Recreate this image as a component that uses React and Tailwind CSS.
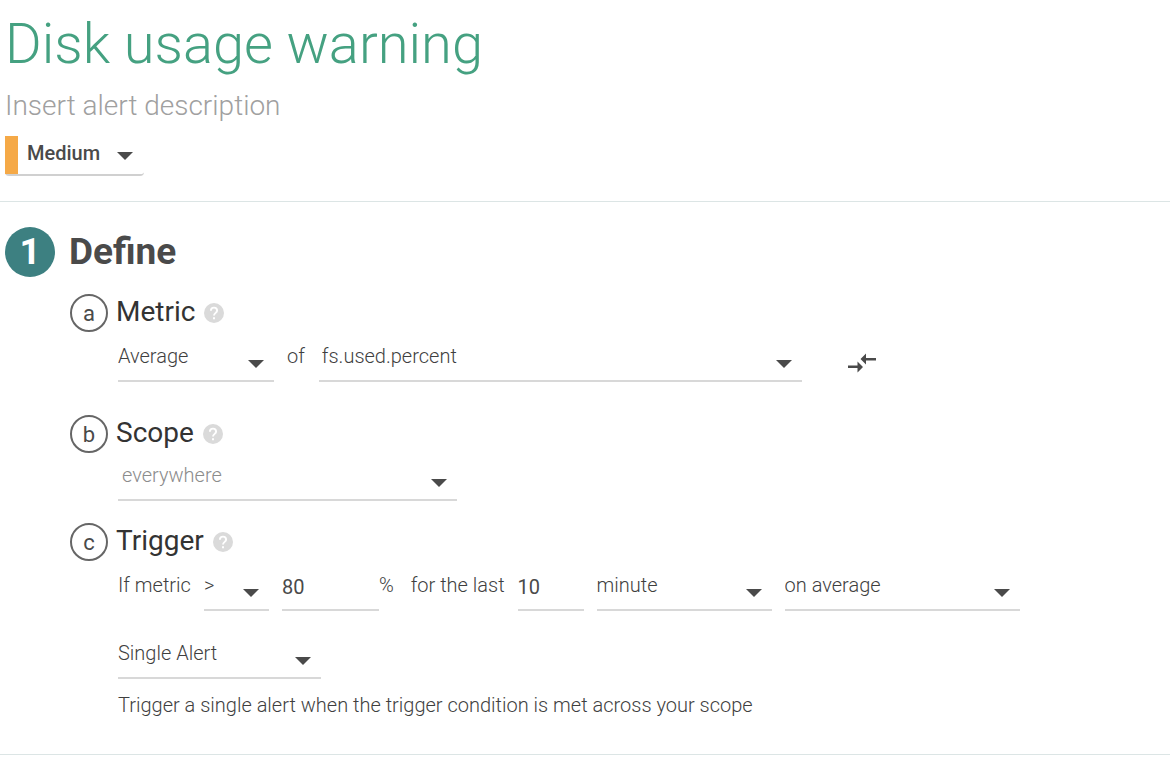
import React, { useState } from 'react';

const SelectField = ({ label, options, value, onChange, className, selectClass = '' }) => (
  <div className={`relative ${className}`}>
    <select
      aria-label={label}
      value={value}
      onChange={(e) => onChange(e.target.value)}
      className={`block w-full h-10 pb-[10px] leading-7 appearance-none bg-transparent border-b-2 border-[#d8d8d8] rounded-none outline-none ${selectClass}`}
    >
      {options.map((option) => (
        <option key={option} value={option}>{option}</option>
      ))}
    </select>
    <svg className="absolute right-[10px] bottom-[14px] w-4 h-2 pointer-events-none" viewBox="0 0 16 8" fill="#4a4a4a">
      <path d="M0 0h16L8 8z" />
    </svg>
  </div>
);

const NumberField = ({ label, value, onChange, className }) => (
  <input
    type="text"
    inputMode="numeric"
    aria-label={label}
    value={value}
    onChange={(e) => onChange(e.target.value)}
    className={`h-10 pb-[6px] font-normal text-[#4a4a4a] bg-transparent border-b-2 border-[#d8d8d8] outline-none ${className}`}
  />
);

const StepHeading = ({ letter, title }) => (
  <div className="flex items-center">
    <span className="flex items-center justify-center w-[38px] h-[38px] pt-[2px] rounded-full border-2 border-[#666666] text-[22px] leading-7 font-normal text-[#4a4a4a]">
      {letter}
    </span>
    <h3 className="ml-2 pb-[2px] text-[28px] leading-8 font-normal text-[#333333]">{title}</h3>
    <button type="button" aria-label={`${title} help`} className="ml-[9px]">
      <svg className="w-5 h-5" viewBox="0 0 20 20" fill="none">
        <circle cx="10" cy="10" r="10" fill="#dadada" />
        <path d="M6.9 7.7a3.1 3.1 0 116.2 0c0 2-3.1 2.4-3.1 4.8" stroke="#fff" strokeWidth="1.9" />
        <path d="M9 14.3h2v2H9z" fill="#fff" />
      </svg>
    </button>
  </div>
);

export default function App() {
  const [severity, setSeverity] = useState('Medium');
  const [description, setDescription] = useState('');
  const [aggregation, setAggregation] = useState('Average');
  const [metric, setMetric] = useState('fs.used.percent');
  const [scope, setScope] = useState('everywhere');
  const [operator, setOperator] = useState('>');
  const [threshold, setThreshold] = useState('80');
  const [duration, setDuration] = useState('10');
  const [unit, setUnit] = useState('minute');
  const [condition, setCondition] = useState('on average');
  const [alertType, setAlertType] = useState('Single Alert');

  return (
    <main className="bg-white font-['Roboto',sans-serif] font-light text-xl leading-7 text-[#3f3f3f]">
      <header className="px-[5px] pt-3 pb-[25px] border-b border-[#dce5e5]">
        <h1 className="text-[56px] leading-[64px] text-[#45a181]">Disk usage warning</h1>
        <input
          type="text"
          aria-label="Alert description"
          placeholder="Insert alert description"
          value={description}
          onChange={(e) => setDescription(e.target.value)}
          className="block w-full mt-3 h-9 text-[28px] leading-9 bg-transparent outline-none placeholder:text-[#a0a0a0]"
        />
        <div className="relative flex w-[139px] mt-3 border-b-2 border-[#d0d0d0] rounded-b-sm">
          <span className="w-[13px] h-[38px] bg-[#f5a947]" />
          <select
            aria-label="Severity"
            value={severity}
            onChange={(e) => setSeverity(e.target.value)}
            className="flex-1 pl-[9px] pb-1 font-medium leading-7 text-[#4a4a4a] appearance-none bg-transparent outline-none"
          >
            <option>High</option>
            <option>Medium</option>
            <option>Low</option>
          </select>
          <svg className="absolute right-[11px] bottom-[14px] w-4 h-2 pointer-events-none" viewBox="0 0 16 8" fill="#4a4a4a">
            <path d="M0 0h16L8 8z" />
          </svg>
        </div>
      </header>

      <section className="px-[5px] pt-[25px] pb-[35px] border-b border-[#dce5e5]">
        <div className="flex items-center">
          <span className="flex items-center justify-center w-[50px] h-[50px] rounded-full bg-[#3d8081] text-[37px] leading-[50px] font-bold text-white">1</span>
          <h2 className="ml-[14px] text-[37px] leading-[50px] font-bold text-[#4a4a4a]">Define</h2>
        </div>

        <div className="mt-[17px] pl-[65px]">
          <StepHeading letter="a" title="Metric" />
          <div className="flex items-start mt-[10px] pl-12">
            <SelectField label="Aggregation" options={['Average', 'Sum', 'Minimum', 'Maximum']} value={aggregation} onChange={setAggregation} className="w-[156px]" />
            <span className="ml-[13px]">of</span>
            <SelectField label="Metric" options={['fs.used.percent', 'fs.free.percent', 'cpu.used.percent']} value={metric} onChange={setMetric} className="ml-[14px] w-full max-w-[483px]" selectClass="pl-[3px]" />
            <button type="button" aria-label="Compare metrics" className="ml-[46px] mt-[11px] shrink-0">
              <svg className="w-7 h-5" viewBox="0 0 28 20" fill="#4a4a4a">
                <path d="M12.500 6l5.500-5.500V5h10v2.400H18v4.100zM0 12.600h9.500V8.500L15 14l-5.500 5.500V15H0z" />
              </svg>
            </button>
          </div>
        </div>

        <div className="mt-[33px] pl-[65px]">
          <StepHeading letter="b" title="Scope" />
          <div className="mt-2 pl-12">
            <SelectField label="Scope" options={['everywhere', 'host', 'container']} value={scope} onChange={setScope} className="w-full max-w-[339px]" selectClass="pl-1 text-[#8c8c8c]" />
          </div>
        </div>

        <div className="mt-[22px] pl-[65px]">
          <StepHeading letter="c" title="Trigger" />
          <div className="flex flex-wrap items-start mt-[10px] pl-12">
            <span>If metric</span>
            <SelectField label="Operator" options={['>', '<', '=']} value={operator} onChange={setOperator} className="ml-[13px] w-[65px]" />
            <NumberField label="Threshold" value={threshold} onChange={setThreshold} className="ml-[13px] w-[97px]" />
            <span>%</span>
            <span className="ml-[17px]">for the last</span>
            <NumberField label="Duration" value={duration} onChange={setDuration} className="ml-[13px] w-[66px]" />
            <SelectField label="Unit" options={['minute', 'hour', 'day']} value={unit} onChange={setUnit} className="ml-[13px] w-[175px]" />
            <SelectField label="Condition" options={['on average', 'in sum', 'at least once']} value={condition} onChange={setCondition} className="ml-[13px] w-[235px]" />
          </div>
          <div className="mt-7 pl-12">
            <SelectField label="Alert type" options={['Single Alert', 'Multiple Alerts']} value={alertType} onChange={setAlertType} className="w-[203px]" />
            <p className="mt-3">Trigger a single alert when the trigger condition is met across your scope</p>
          </div>
        </div>
      </section>
    </main>
  );
}
